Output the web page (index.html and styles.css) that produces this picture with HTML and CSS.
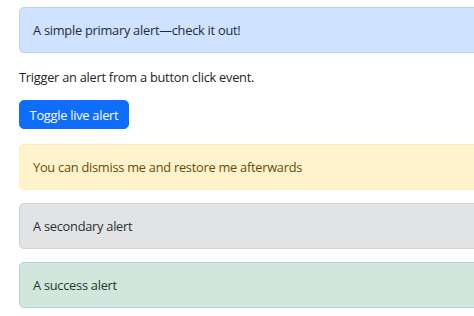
FILE: index.html
```html
<!DOCTYPE html>
<html>
<head>
<meta charset="utf-8">
<link rel="stylesheet" href="styles.css">
</head>
<body>
<div class="page">
  <div class="alert alert-primary">A simple primary alert—check it out!</div>
  <p class="lead-text">Trigger an alert from a button click event.</p>
  <button class="btn" type="button">Toggle live alert</button>
  <div class="stack">
    <div class="alert alert-warning">You can dismiss me and restore me afterwards</div>
    <div class="alert alert-secondary">A secondary alert</div>
    <div class="alert alert-success">A success alert</div>
  </div>
</div>
</body>
</html>
```
FILE: styles.css
```css
html, body {
  margin: 0;
  padding: 0;
  background: #fff;
  overflow: hidden;
}
body {
  font-family: "Open Sans", "Noto Sans", sans-serif;
  font-size: 12.8px;
  letter-spacing: -0.25px;
  color: #212529;
}
.page {
  width: 460px;
  padding: 7px 0 0 19px;
}
.alert {
  box-sizing: border-box;
  height: 46px;
  padding: 1px 13px 0;
  display: flex;
  align-items: center;
  border: 1px solid transparent;
  border-radius: 5px;
  line-height: 19px;
}
.alert-primary { background: #cfe2ff; border-color: #b6d4fe; color: #1f2a3d; }
.alert-warning { background: #fff3cd; border-color: #ffecb5; color: #664d03; }
.alert-secondary { background: #e2e3e5; border-color: #cfd2d5; color: #2b2f32; }
.alert-success { background: #d1e7dd; border-color: #b3d7c6; color: #1d3a2c; }
.lead-text {
  margin: 0;
  height: 47px;
  padding-top: 1px;
  box-sizing: border-box;
  display: flex;
  align-items: center;
  line-height: 19px;
}
.btn {
  display: block;
  box-sizing: border-box;
  height: 29px;
  width: 110px;
  padding: 0;
  font: inherit;
  font-size: 12.8px;
  letter-spacing: -0.25px;
  color: #fff;
  background: #0d6efd;
  border: 1px solid #0d6efd;
  border-radius: 5px;
}
.stack {
  display: flex;
  flex-direction: column;
  gap: 13px;
  margin-top: 15px;
}
```
